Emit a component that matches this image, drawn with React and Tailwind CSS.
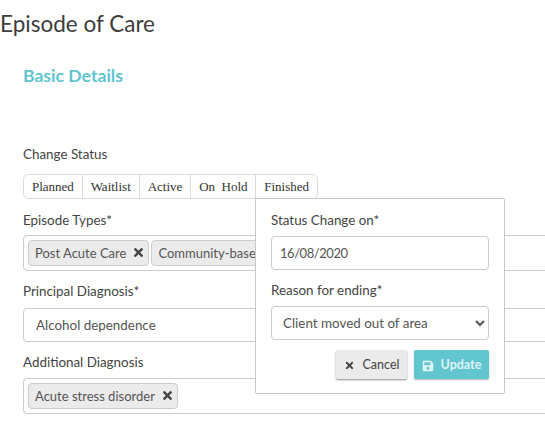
import { useState } from 'react'
import { FaTimes, FaSave } from 'react-icons/fa'

const statuses = [
  { label: 'Planned', width: 'w-[58px]' },
  { label: 'Waitlist', width: 'w-[57px]' },
  { label: 'Active', width: 'w-[52px]' },
  { label: 'On  Hold', width: 'w-[65px]' },
  { label: 'Finished', width: 'w-[62px]' },
]

function Tag({ label }) {
  return (
    <span className="flex h-[26px] shrink-0 items-center gap-[6px] whitespace-nowrap rounded-[4px] border border-[#cccccc] bg-[#ebebeb] pl-[6px] pr-[3px] text-[13px] leading-[22px] text-[#555555]">
      {label}
      <FaTimes size={13} className="text-[#444444]" />
    </span>
  )
}

function App() {
  const [reason, setReason] = useState('moved')

  return (
    <div className="h-[430px] w-[545px] overflow-hidden bg-white font-['Lato',sans-serif] text-[13.4px] text-[#444444]">
      <h1 className="pt-[9px] text-[22.5px] leading-[30px] text-[#3d3d3d]">Episode of Care</h1>

      <div className="w-[640px] pl-[23px]">
        <h2 className="mt-[22px] text-[17.6px] font-bold leading-[30px] text-[#5fc6d0]">Basic Details</h2>

        <p className="mt-[53px] leading-[20px]">Change Status</p>

        <div className="relative mt-[10px]">
          <div className="flex h-[25px] w-[295px] rounded-[5px] border border-[#dcdcdc] font-['Liberation_Serif',serif] text-[13px] text-[#333333]">
            {statuses.map((s, i) => (
              <span
                key={s.label}
                className={`flex items-center justify-center whitespace-pre pt-[1px] ${s.width} ${i > 0 ? 'border-l border-[#dcdcdc]' : ''}`}
              >
                {s.label}
              </span>
            ))}
          </div>

          {/* status change popover */}
          <div className="absolute left-[232px] top-[24px] z-10 h-[196px] w-[250px] rounded-[2px] border border-[#c8c8c8] bg-white px-[15px] pt-[11px]">
            <label className="block leading-[20px]">Status Change on*</label>
            <input
              readOnly
              value="16/08/2020"
              className="mt-[6px] block h-[34px] w-[218px] rounded-[4px] border border-[#cccccc] px-[8px] text-[13px] tracking-[-0.45px] text-[#555555] outline-none"
            />
            <label className="mt-[10px] block leading-[20px]">Reason for ending*</label>
            <select
              value={reason}
              onChange={e => setReason(e.target.value)}
              className="mt-[6px] block h-[34px] w-[218px] rounded-[4px] border border-[#cccccc] bg-white pl-[7px] text-[#555555] outline-none"
            >
              <option value="moved">Client moved out of area</option>
            </select>
            <div className="mt-[10px] flex justify-end gap-[7px]">
              <button className="flex h-[29px] w-[71px] items-center justify-center gap-[8px] rounded-[2px] bg-[#ebebeb] pt-[2px] text-[12.5px] text-[#444444] shadow-[0_1px_2px_rgba(0,0,0,0.45)]">
                <FaTimes size={11} />
                Cancel
              </button>
              <button className="flex h-[29px] w-[75px] items-center justify-center gap-[7px] rounded-[2px] bg-[#62c6d0] pt-[2px] text-[12.5px] font-bold text-[#dff4f6] shadow-[0_1px_2px_rgba(0,0,0,0.3)]">
                <FaSave size={12} />
                Update
              </button>
            </div>
          </div>
        </div>

        <label className="mt-[11px] block leading-[20px]">Episode Types*</label>
        <div className="mt-[5px] flex h-[36px] items-center gap-[2px] rounded-[4px] border border-[#cccccc] pb-[1px] pl-[4px]">
          <Tag label="Post Acute Care" />
          <Tag label="Community-based Care" />
        </div>

        <label className="mt-[10px] block leading-[20px]">Principal Diagnosis*</label>
        <input
          readOnly
          value="Alcohol dependence"
          className="mt-[7px] block h-[34px] w-full rounded-[4px] border border-[#cccccc] px-[12px] text-[#555555] outline-none"
        />

        <label className="mt-[10px] block leading-[20px]">Additional Diagnosis</label>
        <div className="mt-[6px] flex h-[36px] items-center gap-[2px] rounded-[4px] border border-[#cccccc] pb-[1px] pl-[4px]">
          <Tag label="Acute stress disorder" />
        </div>
      </div>
    </div>
  )
}

export default App
